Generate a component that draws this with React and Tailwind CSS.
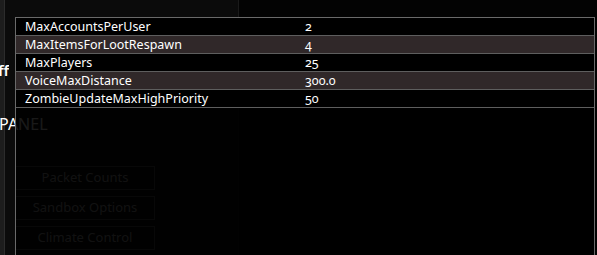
import React from "react";

const rows = [
  ["MaxAccountsPerUser", "2"],
  ["MaxItemsForLootRespawn", "4"],
  ["MaxPlayers", "25"],
  ["VoiceMaxDistance", "300.0"],
  ["ZombieUpdateMaxHighPriority", "50"],
];

export default function App() {
  return (
    <div
      className="relative w-[597px] h-[255px] overflow-hidden bg-[#030303] text-white"
      style={{ fontFamily: '"Noto Sans", "Open Sans", sans-serif' }}
    >
      {/* background admin panel */}
      <div className="flex h-full">
        <div className="w-[5px] h-full bg-[#1d1d1d] border-r border-[#2c2c2c]" />
        <div className="flex flex-col w-[233px] h-full bg-[#0b0b0b]">
          <div className="h-[58px]" />
          <div className="flex -ml-[5px]">
            <div className="w-[9px] flex justify-end overflow-hidden whitespace-nowrap text-[15px] leading-[24px] font-semibold text-white">
              Staff
            </div>
          </div>
          <div className="h-[32px]" />
          <div className="flex whitespace-nowrap text-[16px] leading-[20px] text-white -ml-[6px]">
            PANEL
          </div>
          <div className="h-[32px]" />
          <div className="flex flex-col gap-[6px] pl-[10px] w-[150px]">
            {["Packet Counts", "Sandbox Options", "Climate Control"].map((t) => (
              <div
                key={t}
                className="h-[24px] border border-[#555] flex items-center justify-center text-[13px] text-[#b0b0b0]"
              >
                {t}
              </div>
            ))}
          </div>
        </div>
        <div className="flex-1 h-full border-l border-[#1a1a1a]" />
      </div>

      {/* overlay table */}
      <div className="absolute left-[15px] top-[17px] w-[580px] h-[260px] bg-[rgba(0,0,0,0.9)] border-l border-r border-t border-[#6a6a6a]">
        {rows.map(([k, v], i) => (
          <div
            key={k}
            className={`flex h-[18px] items-center border-b border-[#5e5e5e] text-[12.5px] leading-[17px] ${
              i % 2 === 1 ? "bg-[#302829]" : "bg-black"
            }`}
          >
            <div className="w-[289px] pl-[9px] whitespace-nowrap">{k}</div>
            <div className="oldstyle-nums">{v}</div>
          </div>
        ))}
      </div>
    </div>
  );
}
